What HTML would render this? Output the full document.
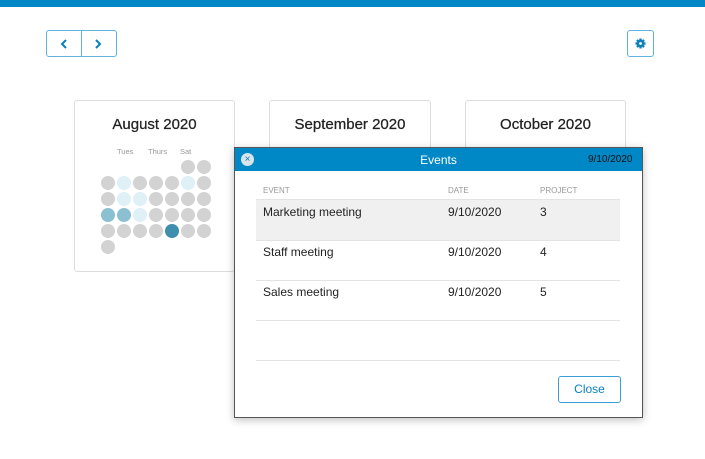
<!DOCTYPE html><html><head><style>
body{margin:0;width:705px;height:459px;background:#fff;font-family:"Liberation Sans",sans-serif;position:relative;overflow:hidden}
.a{position:absolute}
.top{left:0;top:0;width:705px;height:7px;background:#0088c6}
.btn{border:1px solid #5fb3dc;border-radius:3px;box-sizing:border-box;background:#fff}
.card{border:1px solid #ddd;border-radius:3px;box-sizing:border-box;background:#fff;top:100px;height:172px}
.card h3{margin:0;position:absolute;top:15px;width:100%;text-align:center;font-size:15px;font-weight:normal;color:#222;-webkit-text-stroke:0.25px #222}
.d{position:absolute;width:14px;height:14px;border-radius:50%;background:#d3d3d3}
.l{background:#dff0f7}.m{background:#8bbfd2}.k{background:#3f8ead}
.hd{font-size:7.5px;color:#999;top:147px}
.row{position:absolute;left:256px;width:364px;height:40px;border-bottom:1px solid #e3e3e3;font-size:12px;color:#222}
.row span{position:absolute;top:5px}
</style></head><body>
<div class="a top"></div>
<div class="a btn" style="left:46px;top:30px;width:71px;height:27px"></div>
<div class="a" style="left:81px;top:31px;width:1px;height:25px;background:#5fb3dc"></div>
<svg class="a" style="left:60px;top:38px" width="10" height="12"><path d="M6 2L2 6L6 10" stroke="#0a7fbf" stroke-width="2" fill="none"/></svg>
<svg class="a" style="left:93px;top:38px" width="10" height="12"><path d="M3 2L7 6L3 10" stroke="#0a7fbf" stroke-width="2" fill="none"/></svg>
<div class="a btn" style="left:627px;top:30px;width:27px;height:27px"></div>
<svg class="a" style="left:635px;top:38px" width="11" height="11" viewBox="0 0 11 11"><g fill="#0a7fbf"><circle cx="5.5" cy="5.5" r="3.6"/><rect x="4.3" y="0.5" width="2.4" height="10"/><rect x="0.5" y="4.3" width="10" height="2.4"/><rect x="4.3" y="0.5" width="2.4" height="10" transform="rotate(45 5.5 5.5)"/><rect x="4.3" y="0.5" width="2.4" height="10" transform="rotate(-45 5.5 5.5)"/></g><circle cx="5.5" cy="5.5" r="1.4" fill="#fff"/></svg>
<div class="a card" style="left:74px;width:161px"><h3>August 2020</h3></div>
<div class="a card" style="left:269px;width:162px"><h3>September 2020</h3></div>
<div class="a card" style="left:465px;width:161px"><h3>October 2020</h3></div>
<div class="a hd" style="left:117px">Tues</div>
<div class="a hd" style="left:148px">Thurs</div>
<div class="a hd" style="left:180px">Sat</div>
<div id="dots"></div>
<script>
var g=[[0,0,0,0,0,"g","g"],["g","l","g","g","g","l","g"],["g","l","l","g","g","g","g"],["m","m","l","g","g","g","g"],["g","g","g","g","k","g","g"],["g"]];
var h="";g.forEach(function(r,i){r.forEach(function(c,j){if(!c)return;h+='<div class="d '+c+'" style="left:'+(101+j*16)+'px;top:'+(160+i*16)+'px"></div>'})});
document.getElementById("dots").innerHTML=h;
</script>
<div class="a" style="left:234px;top:147px;width:409px;height:271px;border:1px solid #555;box-sizing:border-box;background:#fff;box-shadow:0 2px 8px rgba(0,0,0,.25)"></div>
<div class="a" style="left:235px;top:148px;width:407px;height:23px;background:#0088c6"></div>
<div class="a" style="left:241px;top:153px;width:13px;height:13px;border-radius:50%;background:#d9e4ea;color:#0a7fbf;font-size:10px;line-height:13px;text-align:center">×</div>
<div class="a" style="left:235px;top:153px;width:407px;text-align:center;color:#fff;font-size:12px">Events</div>
<div class="a" style="left:588px;top:154px;font-size:10px;color:#111">9/10/2020</div>
<div class="a" style="top:186px;left:263px;font-size:8px;color:#999">EVENT</div>
<div class="a" style="top:186px;left:448px;font-size:8px;color:#999">DATE</div>
<div class="a" style="top:186px;left:540px;font-size:8px;color:#999">PROJECT</div>
<div class="a" style="left:256px;top:199px;width:364px;height:1px;background:#e3e3e3"></div>
<div class="row" style="top:200px;background:#f0f0f0"><span style="left:7px">Marketing meeting</span><span style="left:192px">9/10/2020</span><span style="left:284px">3</span></div>
<div class="row" style="top:240px"><span style="left:7px">Staff meeting</span><span style="left:192px">9/10/2020</span><span style="left:284px">4</span></div>
<div class="row" style="top:280px"><span style="left:7px">Sales meeting</span><span style="left:192px">9/10/2020</span><span style="left:284px">5</span></div>
<div class="row" style="top:320px"></div>
<div class="a btn" style="left:558px;top:376px;width:63px;height:27px;border-color:#3a9fd6;color:#0a7fbf;font-size:12px;text-align:center;line-height:25px">Close</div>
</body></html>
